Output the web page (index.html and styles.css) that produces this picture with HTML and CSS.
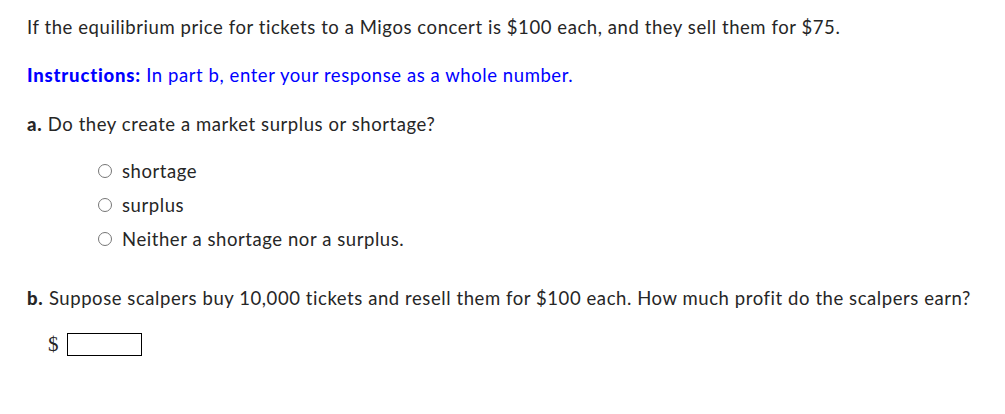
FILE: index.html
```html
<!DOCTYPE html>
<html lang="en">
<head>
<meta charset="utf-8">
<title>Question</title>
<link rel="stylesheet" href="styles.css">
</head>
<body>
<div class="question">
  <p class="stem">If the equilibrium price for tickets to a Migos concert is $100 each, and they sell them for $75.</p>
  <p class="instructions"><strong>Instructions:</strong> In part b, enter your response as a whole number.</p>
  <p class="part"><strong>a.</strong> Do they create a market surplus or shortage?</p>
  <ul class="choices">
    <li class="choice"><span class="radio"></span><span>shortage</span></li>
    <li class="choice"><span class="radio"></span><span>surplus</span></li>
    <li class="choice"><span class="radio"></span><span>Neither a shortage nor a surplus.</span></li>
  </ul>
  <p class="part part-b"><strong>b.</strong> Suppose scalpers buy 10,000 tickets and resell them for $100 each. How much profit do the scalpers earn?</p>
  <div class="answer-row">
    <span class="currency">$</span><span class="input"></span>
  </div>
</div>
</body>
</html>
```
FILE: styles.css
```css
html, body {
  margin: 0;
  padding: 0;
  background: #ffffff;
}
body {
  font-family: "Lato", "Liberation Sans", sans-serif;
  font-size: 18.5px;
  letter-spacing: 0.57px;
  color: #262626;
}
.question {
  padding: 15px 0 0 27px;
}
.question p {
  margin: 0;
  line-height: 24px;
}
.question strong {
  font-weight: 900;
  letter-spacing: 0.8px;
}
.instructions {
  margin-top: 24px !important;
  color: #0000ff;
}
.part {
  margin-top: 25px !important;
}
.choices {
  list-style: none;
  margin: 23px 0 0 0;
  padding: 0 0 0 71px;
  display: flex;
  flex-direction: column;
  gap: 10px;
}
.choice {
  display: flex;
  align-items: center;
  gap: 10px;
  height: 24px;
}
.radio {
  width: 12px;
  height: 12px;
  border: 1px solid #767676;
  border-radius: 50%;
  flex: none;
}
.part-b {
  margin-top: 35px !important;
}
.answer-row {
  margin: 22px 0 0 21px;
  display: flex;
  align-items: center;
  gap: 8px;
}
.currency {
  font-family: "Liberation Serif", serif;
  font-size: 21px;
  letter-spacing: 0;
  color: #262626;
}
.input {
  width: 73px;
  height: 21px;
  border: 1px solid #000;
}
```
